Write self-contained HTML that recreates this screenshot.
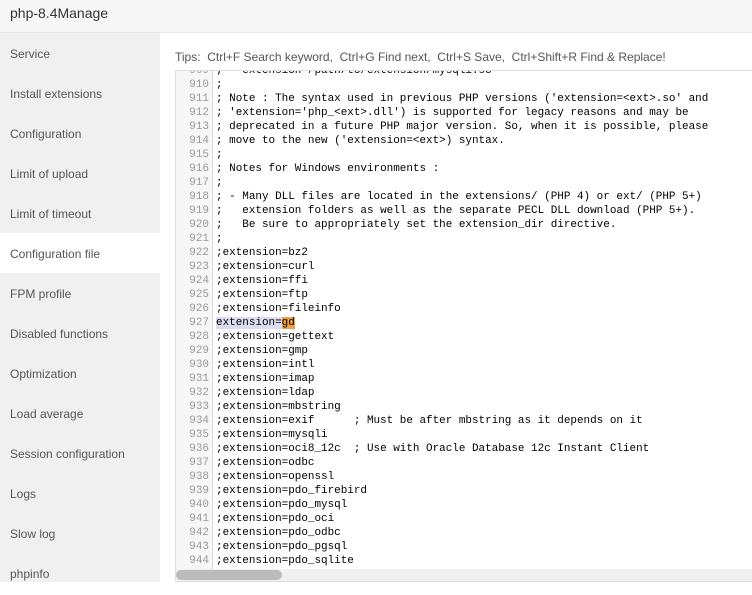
<!DOCTYPE html>
<html><head><meta charset="utf-8"><style>
body{margin:0;width:752px;height:582px;overflow:hidden;background:#fff;font-family:"Liberation Sans",sans-serif;position:relative}
.title{position:absolute;left:0;top:0;width:752px;height:33px;background:#f7f7f7;border-bottom:1px solid #e6e6e6;box-sizing:border-box;font-size:14px;color:#333;padding:5px 0 0 10px}
.side{position:absolute;left:0;top:33px;width:160px;height:549px;background:#f0f0f0}
.side div{height:40px;line-height:42px;padding-left:10px;font-size:12px;color:#555}
.side .act{background:#fff}
.tips{position:absolute;left:175px;top:50px;font-size:12px;color:#555}
.ed{position:absolute;left:175px;top:70px;width:580px;height:512px;border:1px solid #ddd;box-sizing:border-box;overflow:hidden}
.gut{position:absolute;left:0;top:0;width:36px;height:100%;background:#f7f7f7;border-right:1px solid #ddd}
.code{position:absolute;left:0;top:-7px;font-family:"Liberation Mono",monospace;font-size:10.95px;line-height:14px;color:#000;white-space:pre}
.code span.n{display:inline-block;width:33px;text-align:right;color:#999;margin-right:7px}
.hl{background:#dcdcf0}.gd{background:#f0a040}
.sb{position:absolute;left:0;bottom:0;width:100%;height:12px;background:#f0f0f0}
.th{position:absolute;left:0;bottom:1px;width:106px;height:10px;background:#bbb;border-radius:5px}
</style></head><body>
<div class="title">php-8.4Manage</div>
<div class="side">
<div>Service</div><div>Install extensions</div><div>Configuration</div><div>Limit of upload</div><div>Limit of timeout</div><div class="act">Configuration file</div><div>FPM profile</div><div>Disabled functions</div><div>Optimization</div><div>Load average</div><div>Session configuration</div><div>Logs</div><div>Slow log</div><div>phpinfo</div>
</div>
<div class="tips">Tips:&nbsp; Ctrl+F Search keyword,&nbsp; Ctrl+G Find next,&nbsp; Ctrl+S Save,&nbsp; Ctrl+Shift+R Find &amp; Replace!</div>
<div class="ed"><div class="gut"></div>
<div class="code"><span class="n">909</span>;   extension=/path/to/extension/mysqli.so
<span class="n">910</span>;
<span class="n">911</span>; Note : The syntax used in previous PHP versions ('extension=&lt;ext&gt;.so' and
<span class="n">912</span>; 'extension='php_&lt;ext&gt;.dll') is supported for legacy reasons and may be
<span class="n">913</span>; deprecated in a future PHP major version. So, when it is possible, please
<span class="n">914</span>; move to the new ('extension=&lt;ext&gt;) syntax.
<span class="n">915</span>;
<span class="n">916</span>; Notes for Windows environments :
<span class="n">917</span>;
<span class="n">918</span>; - Many DLL files are located in the extensions/ (PHP 4) or ext/ (PHP 5+)
<span class="n">919</span>;   extension folders as well as the separate PECL DLL download (PHP 5+).
<span class="n">920</span>;   Be sure to appropriately set the extension_dir directive.
<span class="n">921</span>;
<span class="n">922</span>;extension=bz2
<span class="n">923</span>;extension=curl
<span class="n">924</span>;extension=ffi
<span class="n">925</span>;extension=ftp
<span class="n">926</span>;extension=fileinfo
<span class="n">927</span><span class="hl">extension=</span><span class="gd">gd</span>
<span class="n">928</span>;extension=gettext
<span class="n">929</span>;extension=gmp
<span class="n">930</span>;extension=intl
<span class="n">931</span>;extension=imap
<span class="n">932</span>;extension=ldap
<span class="n">933</span>;extension=mbstring
<span class="n">934</span>;extension=exif      ; Must be after mbstring as it depends on it
<span class="n">935</span>;extension=mysqli
<span class="n">936</span>;extension=oci8_12c  ; Use with Oracle Database 12c Instant Client
<span class="n">937</span>;extension=odbc
<span class="n">938</span>;extension=openssl
<span class="n">939</span>;extension=pdo_firebird
<span class="n">940</span>;extension=pdo_mysql
<span class="n">941</span>;extension=pdo_oci
<span class="n">942</span>;extension=pdo_odbc
<span class="n">943</span>;extension=pdo_pgsql
<span class="n">944</span>;extension=pdo_sqlite
<span class="n">945</span>;extension=pgsql</div>
<div class="sb"><div class="th"></div></div>
</div>
</body></html>
